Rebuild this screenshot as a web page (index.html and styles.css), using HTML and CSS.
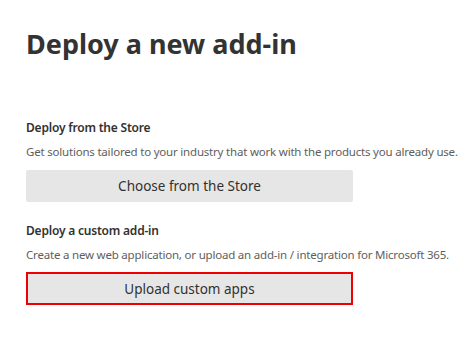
FILE: index.html
```html
<!DOCTYPE html>
<html lang="en">
<head>
<meta charset="utf-8">
<title>Deploy a new add-in</title>
<link rel="stylesheet" href="styles.css">
</head>
<body>
<main class="page">
  <h1 class="title">Deploy a new add-in</h1>
  <section class="section">
    <h2 class="section-title">Deploy from the Store</h2>
    <p class="section-desc">Get solutions tailored to your industry that work with the products you already use.</p>
    <button class="btn" type="button">Choose from the Store</button>
  </section>
  <section class="section">
    <h2 class="section-title">Deploy a custom add-in</h2>
    <p class="section-desc">Create a new web application, or upload an add-in / integration for Microsoft 365.</p>
    <button class="btn btn-highlight" type="button">Upload custom apps</button>
  </section>
</main>
</body>
</html>
```
FILE: styles.css
```css
html, body {
  margin: 0;
  padding: 0;
  background: #ffffff;
}
body {
  font-family: "Noto Sans", "Open Sans", sans-serif;
  color: #323130;
}
.page {
  display: flex;
  flex-direction: column;
  padding: 24px 0 0 26px;
}
.title {
  margin: 0 0 56px 0;
  font-size: 27px;
  line-height: 40px;
  font-weight: 700;
  color: #333333;
}
.section {
  display: flex;
  flex-direction: column;
  align-items: flex-start;
  margin-bottom: 21px;
}
.section-title {
  margin: 0 0 8px 0;
  font-size: 12px;
  line-height: 16px;
  font-weight: 600;
  letter-spacing: -0.2px;
  color: #323130;
}
.section-desc {
  margin: 0 0 10px 0;
  font-size: 11.5px;
  line-height: 16px;
  letter-spacing: -0.2px;
  white-space: nowrap;
  color: #605e5c;
}
.btn {
  width: 327px;
  height: 32px;
  padding: 0;
  border: 0;
  border-radius: 2px;
  background: #e6e6e6;
  font-family: inherit;
  font-size: 13.5px;
  font-weight: 400;
  color: #323130;
}
.btn-highlight {
  margin-top: -1px;
  height: 33px;
  border: 2px solid #ee0000;
  border-radius: 0;
}
```
